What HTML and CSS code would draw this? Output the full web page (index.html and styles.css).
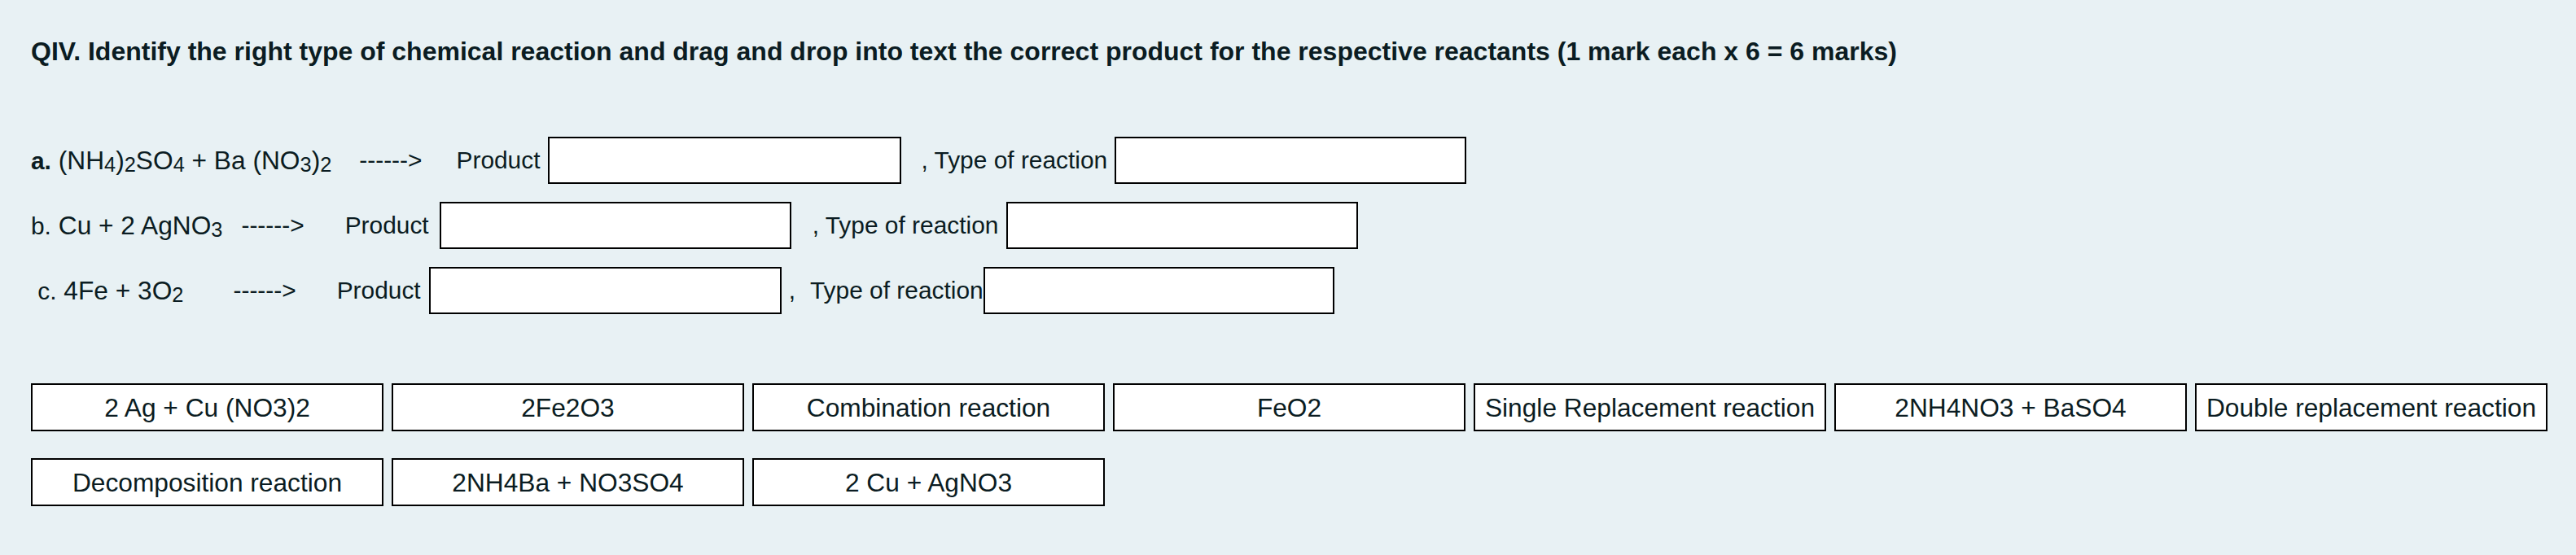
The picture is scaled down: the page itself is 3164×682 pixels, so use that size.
FILE: index.html
```html
<!DOCTYPE html>
<html lang="en">
<head>
<meta charset="utf-8">
<title>QIV. Chemical reactions</title>
<link rel="stylesheet" href="styles.css">
</head>
<body>
<div class="page">
  <h1 class="title">QIV. Identify the right type of chemical reaction and drag and drop into text the correct product for the respective reactants (1 mark each x 6 = 6 marks)</h1>

  <div class="questions">
    <div class="row row-a">
      <span class="eq"><b class="letter">a.</b> (NH<sub>4</sub>)<sub>2</sub>SO<sub>4</sub> + Ba (NO<sub>3</sub>)<sub>2</sub></span>
      <span class="lbl arrow">------&gt;</span>
      <span class="lbl product">Product</span>
      <span class="drop drop-product"></span>
      <span class="lbl sep">, Type of reaction</span>
      <span class="drop drop-type"></span>
    </div>
    <div class="row row-b">
      <span class="eq"><span class="letter">b.</span> Cu + 2 AgNO<sub>3</sub></span>
      <span class="lbl arrow">------&gt;</span>
      <span class="lbl product">Product</span>
      <span class="drop drop-product"></span>
      <span class="lbl sep">, Type of reaction</span>
      <span class="drop drop-type"></span>
    </div>
    <div class="row row-c">
      <span class="eq"><span class="letter">&nbsp;c.</span> 4Fe + 3O<sub>2</sub></span>
      <span class="lbl arrow">------&gt;</span>
      <span class="lbl product">Product</span>
      <span class="drop drop-product"></span>
      <span class="lbl comma">,</span>
      <span class="lbl sep">Type of reaction</span>
      <span class="drop drop-type"></span>
    </div>
  </div>

  <div class="chips">
    <div class="chip">2 Ag + Cu (NO3)2</div>
    <div class="chip">2Fe2O3</div>
    <div class="chip">Combination reaction</div>
    <div class="chip">FeO2</div>
    <div class="chip">Single Replacement reaction</div>
    <div class="chip">2NH4NO3 + BaSO4</div>
    <div class="chip">Double replacement reaction</div>
    <div class="chip">Decomposition reaction</div>
    <div class="chip">2NH4Ba + NO3SO4</div>
    <div class="chip">2 Cu + AgNO3</div>
  </div>
</div>
</body>
</html>
```
FILE: styles.css
```css
html, body {
  margin: 0;
  padding: 0;
  background: #e8f1f4;
}

body {
  font-family: "Liberation Sans", Arial, Helvetica, sans-serif;
  color: #0b1c22;
}

.page {
  width: 3164px;
  height: 682px;
  box-sizing: border-box;
  padding: 46px 30px 0 38px;
  background: #e8f1f4;
  overflow: hidden;
}

.title {
  margin: 0;
  font-size: 32px;
  line-height: 34px;
  font-weight: bold;
  white-space: nowrap;
}

.questions {
  margin-top: 88px;
  display: flex;
  flex-direction: column;
  gap: 22px;
}

.row {
  display: flex;
  align-items: center;
  height: 58px;
  white-space: pre;
}

.eq {
  font-size: 31.7px;
  line-height: 34px;
}

.letter {
  font-size: 29.9px;
}

b.letter {
  font-weight: bold;
}

.eq sub {
  font-size: 0.8em;
  vertical-align: -3px;
  line-height: 0;
}

.lbl {
  font-size: 29.9px;
  line-height: 34px;
}

.drop {
  display: block;
  box-sizing: border-box;
  width: 433px;
  height: 58px;
  background: #ffffff;
  border: 2px solid #000000;
  flex: none;
}

/* row a spacing */
.row-a .arrow { margin-left: 34px; }
.row-a .product { margin-left: 42px; }
.row-a .drop-product { margin-left: 9px; width: 434px; }
.row-a .sep { margin-left: 25px; }
.row-a .drop-type { margin-left: 9px; width: 432px; }

/* row b spacing */
.row-b .arrow { margin-left: 23px; }
.row-b .product { margin-left: 50px; }
.row-b .drop-product { margin-left: 13px; width: 432px; }
.row-b .sep { margin-left: 26px; }
.row-b .drop-type { margin-left: 10px; width: 432px; }

/* row c spacing */
.row-c .arrow { margin-left: 61px; }
.row-c .product { margin-left: 50px; }
.row-c .drop-product { margin-left: 10px; }
.row-c .comma { margin-left: 9px; }
.row-c .sep { margin-left: 18px; }
.row-c .drop-type { margin-left: 0; width: 431px; }

.chips {
  margin-top: 85px;
  display: flex;
  flex-wrap: wrap;
  column-gap: 10px;
  row-gap: 33px;
}

.chip {
  box-sizing: border-box;
  width: 433px;
  height: 59px;
  background: #ffffff;
  border: 2px solid #000000;
  display: flex;
  align-items: center;
  justify-content: center;
  font-size: 31.7px;
  line-height: 34px;
  white-space: nowrap;
}
```
